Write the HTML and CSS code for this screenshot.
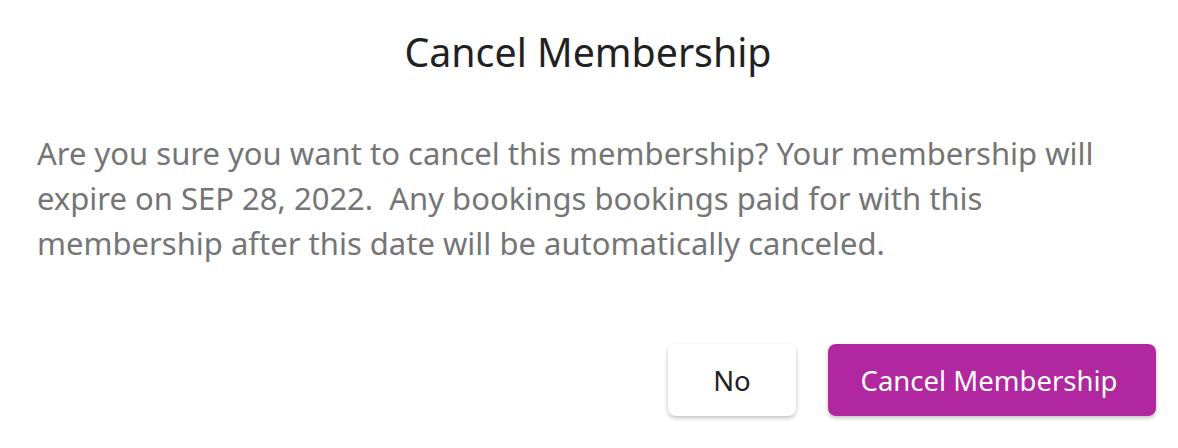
FILE: index.html
```html
<!DOCTYPE html>
<html>
<head>
<meta charset="utf-8">
<link rel="stylesheet" href="styles.css">
</head>
<body>
<div class="dialog">
  <h1 class="title">Cancel Membership</h1>
  <p class="message">Are you sure you want to cancel this membership? Your membership will expire on SEP 28, 2022.&nbsp; Any bookings bookings paid for with this membership after this date will be automatically canceled.</p>
  <div class="actions">
    <button class="btn btn-secondary">No</button>
    <button class="btn btn-primary">Cancel Membership</button>
  </div>
</div>
</body>
</html>
```
FILE: styles.css
```css
html, body {
  margin: 0;
  padding: 0;
  background: #ffffff;
}
body {
  font-family: "Noto Sans", "Open Sans", sans-serif;
  width: 1178px;
  height: 448px;
  overflow: hidden;
}
.dialog {
  padding: 26px 22px 0 37px;
  display: flex;
  flex-direction: column;
}
.title {
  margin: 0 0 0 -17px;
  font-size: 39.3px;
  font-weight: 400;
  line-height: 52px;
  color: #212121;
  text-align: center;
}
.message {
  margin: 53px 0 0 0;
  font-size: 31px;
  line-height: 45px;
  color: #757575;
  max-width: 1100px;
}
.actions {
  margin-top: 78px;
  display: flex;
  justify-content: flex-end;
  gap: 32px;
}
.btn {
  height: 72px;
  border: none;
  border-radius: 8px;
  font-family: inherit;
  font-size: 27.5px;
  padding: 0;
  box-shadow: 0 2px 4px rgba(0, 0, 0, 0.25);
}
.btn-secondary {
  width: 128px;
  background: #ffffff;
  color: #212121;
}
.btn-primary {
  width: 328px;
  background: #b0279f;
  color: #ffffff;
  padding-right: 6px;
}
```
